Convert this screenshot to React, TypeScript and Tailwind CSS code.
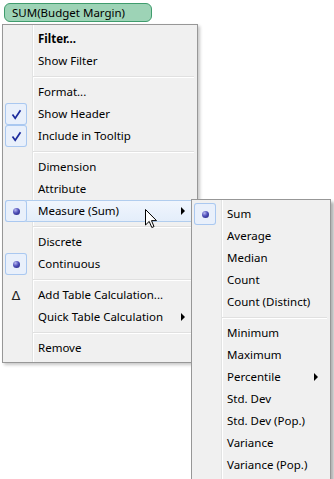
import React from 'react';

type Icon = 'check' | 'radio' | 'delta';

type Entry =
  | { sep: true }
  | { sep?: false; label: string; icon?: Icon; bold?: boolean; arrow?: boolean; active?: boolean; boxed?: boolean };

const mainMenu: Entry[] = [
  { label: 'Filter...', bold: true },
  { label: 'Show Filter' },
  { sep: true },
  { label: 'Format...' },
  { label: 'Show Header', icon: 'check', boxed: true },
  { label: 'Include in Tooltip', icon: 'check', boxed: true },
  { sep: true },
  { label: 'Dimension' },
  { label: 'Attribute' },
  { label: 'Measure (Sum)', icon: 'radio', boxed: true, arrow: true, active: true },
  { sep: true },
  { label: 'Discrete' },
  { label: 'Continuous', icon: 'radio', boxed: true },
  { sep: true },
  { label: 'Add Table Calculation...', icon: 'delta' },
  { label: 'Quick Table Calculation', arrow: true },
  { sep: true },
  { label: 'Remove' },
];

const subMenu: Entry[] = [
  { label: 'Sum', icon: 'radio', boxed: true },
  { label: 'Average' },
  { label: 'Median' },
  { label: 'Count' },
  { label: 'Count (Distinct)' },
  { sep: true },
  { label: 'Minimum' },
  { label: 'Maximum' },
  { label: 'Percentile', arrow: true },
  { label: 'Std. Dev' },
  { label: 'Std. Dev (Pop.)' },
  { label: 'Variance' },
  { label: 'Variance (Pop.)' },
];

function ItemIcon({ icon }: { icon?: Icon }) {
  if (icon === 'check') {
    return (
      <svg width="11" height="11" viewBox="0 0 11 11">
        <path d="M1.5 5.5 L4.2 9.2 L9.5 1.2" fill="none" stroke="#1c2b9c" strokeWidth="1.7" />
      </svg>
    );
  }
  if (icon === 'radio') {
    return (
      <span className="block w-[7px] h-[7px] rounded-full bg-[radial-gradient(circle_at_35%_30%,#b8b8f2_0%,#5050b8_45%,#1e1e78_100%)]" />
    );
  }
  if (icon === 'delta') {
    return <span className="text-[13px] leading-none text-[#222] font-['DejaVu_Sans',sans-serif]">Δ</span>;
  }
  return null;
}

function Menu({ items, className }: { items: Entry[]; className: string }) {
  return (
    <div
      className={`absolute border border-[#979797] px-[2px] py-[3px] bg-[linear-gradient(to_right,#f0f0f0_29px,#e2e3e3_29px,#e2e3e3_30px,#ffffff_30px,#ffffff_31px,#f0f0f0_31px)] ${className}`}
    >
      {items.map((it, i) =>
        it.sep ? (
          <div key={i} className="h-[9px] pt-[4px] ml-[28px] mr-[1px]">
            <div className="h-px bg-[#e0e0e0]" />
            <div className="h-px bg-white" />
          </div>
        ) : (
          <div
            key={i}
            className={`h-[22px] flex items-center rounded-[3px] ${
              it.active
                ? 'bg-[linear-gradient(to_bottom,#f1f6fd,#e3edfa)] shadow-[inset_0_0_0_1px_#b1cdee]'
                : ''
            }`}
          >
            <div
              className={`w-[22px] h-[22px] shrink-0 flex items-center justify-center rounded-[3px] ${
                it.boxed ? 'bg-[#e9f0fb] shadow-[inset_0_0_0_1px_#aac8f0]' : ''
              }`}
            >
              <ItemIcon icon={it.icon} />
            </div>
            <span className={`pl-[11px] text-[11.5px] text-black whitespace-nowrap ${it.bold ? 'font-bold' : ''}`}>
              {it.label}
            </span>
            {it.arrow && (
              <span className="ml-auto mr-[10px] w-0 h-0 border-y-[4px] border-y-transparent border-l-[4px] border-l-black" />
            )}
          </div>
        )
      )}
    </div>
  );
}

export default function App() {
  return (
    <div className="relative w-[334px] h-[479px] overflow-hidden bg-white font-['Noto_Sans',sans-serif]">
      <div className="pt-[3px] pl-[4px]">
        <div className="w-[148px] h-[19px] flex items-center pl-[7px] rounded-[6px] border border-[#3f9c6d] bg-[#9dd3b6] text-[11.5px] text-black leading-none">
          SUM(Budget Margin)
        </div>
      </div>

      <Menu items={mainMenu} className="left-[2px] top-[24px] w-[196px] shadow-[2px_2px_3px_rgba(0,0,0,0.22)]" />
      <Menu items={subMenu} className="left-[191px] top-[199px] w-[140px] shadow-[3px_3px_3px_rgba(0,0,0,0.3)]" />

      <svg className="absolute left-[145px] top-[209px]" width="13" height="20" viewBox="0 0 13 20">
        <path d="M0.5 0.5 L0.5 16 L4.2 12.4 L6.8 18.5 L9 17.6 L6.5 11.6 L11.5 11.6 Z" fill="#fff" stroke="#000" strokeWidth="1" strokeLinejoin="round" />
      </svg>
    </div>
  );
}
